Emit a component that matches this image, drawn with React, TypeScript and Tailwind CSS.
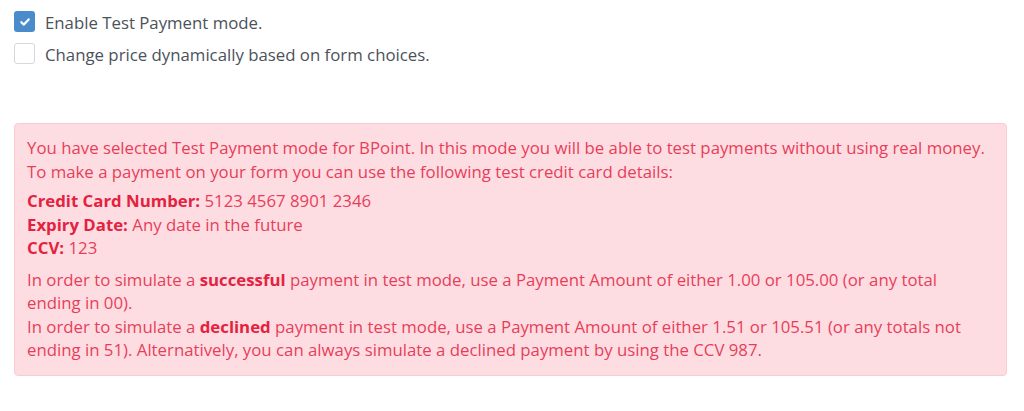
import React from "react";

export default function App() {
  return (
    <div className="w-[1024px] h-[411px] bg-white px-[14px] pt-[11px] text-[16.8px] leading-[24px]" style={{ fontFamily: '"Open Sans", "Liberation Sans", sans-serif' }}>
      <div className="flex flex-col gap-[8px]">
        <label className="flex items-start gap-[10px] text-[#4b525a]">
          <span className="flex h-[21px] w-[21px] shrink-0 items-center justify-center rounded-[3px] bg-[#4a8ccb]">
            <svg width="12" height="12" viewBox="0 0 12 12" fill="none">
              <path d="M2.3 6.2 L4.9 8.6 L9.7 3.4" stroke="white" strokeWidth="2.2" strokeLinecap="round" strokeLinejoin="round" />
            </svg>
          </span>
          <span>Enable Test Payment mode.</span>
        </label>
        <label className="flex items-start gap-[10px] text-[#4b525a]">
          <span className="h-[21px] w-[21px] shrink-0 rounded-[3px] border border-[#d4d7db] bg-white" />
          <span>Change price dynamically based on form choices.</span>
        </label>
      </div>

      <div className="mt-[56px] w-[993px] rounded-[4px] border border-[#fbcbd2] bg-[#fedde2] px-[12px] pt-[12px] pb-[13px] leading-[23.5px] text-[#e83d5a]">
        <p>
          You have selected Test Payment mode for BPoint. In this mode you will be able to test payments without using real money.
          <br />
          To make a payment on your form you can use the following test credit card details:
        </p>
        <p className="mt-[6px]">
          <strong className="font-bold text-[#e4223f]">Credit Card Number:</strong> 5123 4567 8901 2346
          <br />
          <strong className="font-bold text-[#e4223f]">Expiry Date:</strong> Any date in the future
          <br />
          <strong className="font-bold text-[#e4223f]">CCV:</strong> 123
        </p>
        <p className="mt-[8px]">
          In order to simulate a <strong className="font-bold text-[#e4223f]">successful</strong> payment in test mode, use a Payment Amount of either 1.00 or 105.00 (or any total ending in 00).
          <br />
          In order to simulate a <strong className="font-bold text-[#e4223f]">declined</strong> payment in test mode, use a Payment Amount of either 1.51 or 105.51 (or any totals not ending in 51). Alternatively, you can always simulate a declined payment by using the CCV 987.
        </p>
      </div>
    </div>
  );
}
